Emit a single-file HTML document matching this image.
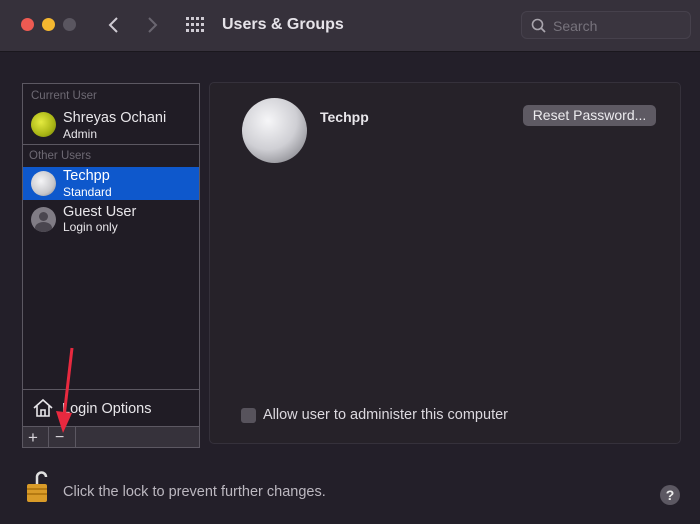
<!DOCTYPE html>
<html><head><style>
*{margin:0;padding:0;box-sizing:border-box}
body{width:700px;height:524px;background:#231f29;font-family:"Liberation Sans",sans-serif;color:#e8e6ea;position:relative;overflow:hidden}
.abs{position:absolute}
.tb{left:0;top:0;width:700px;height:52px;background:#36313b;border-bottom:1px solid #1a171d}
.dot{width:13px;height:13px;border-radius:50%;top:18px}
.t{font-size:13px}
</style></head><body>
<div class="abs tb">
 <div class="abs dot" style="left:21px;background:#ee5a52"></div>
 <div class="abs dot" style="left:42px;background:#f4b730"></div>
 <div class="abs dot" style="left:63px;background:#5a5660"></div>
 <svg class="abs" style="left:106px;top:16px" width="14" height="18"><path d="M11 2L4 9L11 16" stroke="#cfcbd3" stroke-width="2" fill="none"/></svg>
 <svg class="abs" style="left:146px;top:16px" width="14" height="18"><path d="M3 2L10 9L3 16" stroke="#6a6670" stroke-width="2" fill="none"/></svg>
 <svg class="abs" style="left:186px;top:17px" width="20" height="16" fill="#cfcbd3">
  <rect x="0" y="0" width="3" height="3"/><rect x="5" y="0" width="3" height="3"/><rect x="10" y="0" width="3" height="3"/><rect x="15" y="0" width="3" height="3"/>
  <rect x="0" y="6" width="3" height="3"/><rect x="5" y="6" width="3" height="3"/><rect x="10" y="6" width="3" height="3"/><rect x="15" y="6" width="3" height="3"/>
  <rect x="0" y="12" width="3" height="3"/><rect x="5" y="12" width="3" height="3"/><rect x="10" y="12" width="3" height="3"/><rect x="15" y="12" width="3" height="3"/>
 </svg>
 <div class="abs" style="left:222px;top:16px;font-size:16px;font-weight:bold;color:#e6e3e9">Users &amp; Groups</div>
 <div class="abs" style="left:521px;top:11px;width:170px;height:28px;border:1px solid #46414c;border-radius:6px;background:#3a353f"></div>
 <svg class="abs" style="left:531px;top:18px" width="16" height="16"><circle cx="6.5" cy="6.5" r="5" stroke="#a9a5ad" stroke-width="1.6" fill="none"/><path d="M10 10L14 14" stroke="#a9a5ad" stroke-width="1.8"/></svg>
 <div class="abs" style="left:553px;top:18px;font-size:14px;color:#77737c">Search</div>
</div>
<!-- sidebar -->
<div class="abs" style="left:22px;top:83px;width:178px;height:365px;border:1px solid #5c5862;background:#201c25"></div>
<div class="abs t" style="left:31px;top:90px;font-size:11.5px;color:#6d6973">Current User</div>
<div class="abs" style="left:31px;top:112px;width:25px;height:25px;border-radius:50%;background:radial-gradient(circle at 40% 40%,#e4ea40,#a9b515 60%,#6c7a0a)"></div>
<div class="abs t" style="left:63px;top:110px;font-size:14.5px">Shreyas Ochani</div>
<div class="abs" style="left:63px;top:127px;font-size:12px">Admin</div>
<div class="abs" style="left:22px;top:144px;width:178px;height:1px;background:#5c5862"></div>
<div class="abs" style="left:29px;top:150px;font-size:11.5px;color:#6d6973">Other Users</div>
<div class="abs" style="left:23px;top:167px;width:176px;height:33px;background:#0e58cc"></div>
<div class="abs" style="left:31px;top:171px;width:25px;height:25px;border-radius:50%;background:radial-gradient(circle at 40% 40%,#f4f4f6,#c8c8cc 60%,#7a7a80)"></div>
<div class="abs" style="left:63px;top:168px;font-size:14.5px;color:#fff">Techpp</div>
<div class="abs" style="left:63px;top:185px;font-size:12px;color:#fff">Standard</div>
<div class="abs" style="left:31px;top:207px;width:25px;height:25px;border-radius:50%;background:#807c85;overflow:hidden"><div class="abs" style="left:8px;top:5px;width:9px;height:9px;border-radius:50%;background:#4a464f"></div><div class="abs" style="left:4px;top:15px;width:17px;height:12px;border-radius:50%;background:#4a464f"></div></div>
<div class="abs" style="left:63px;top:204px;font-size:14.5px">Guest User</div>
<div class="abs" style="left:63px;top:220px;font-size:12px">Login only</div>
<div class="abs" style="left:22px;top:389px;width:178px;height:1px;background:#5c5862"></div>
<svg class="abs" style="left:32px;top:398px" width="22" height="20"><path d="M2 10L11 2L20 10M5 8V18H17V8M9 18V12H13V18" stroke="#e8e6ea" stroke-width="1.6" fill="none"/></svg>
<div class="abs" style="left:62px;top:401px;font-size:14.5px">Login Options</div>
<div class="abs" style="left:22px;top:426px;width:178px;height:22px;background:#36323b;border:1px solid #5c5862"></div>
<div class="abs" style="left:48px;top:427px;width:1px;height:21px;background:#5c5862"></div>
<div class="abs" style="left:75px;top:427px;width:1px;height:21px;background:#5c5862"></div>
<div class="abs" style="left:28px;top:428px;font-size:17px;color:#d8d5db">+</div>
<div class="abs" style="left:55px;top:429px;font-size:16px;color:#d8d5db">−</div>
<!-- red arrow -->
<svg class="abs" style="left:52px;top:345px" width="30" height="95"><path d="M20 3L12 72" stroke="#e8293f" stroke-width="3"/><path d="M4 66L11 88L20 68Z" fill="#e8293f"/></svg>
<!-- right panel -->
<div class="abs" style="left:209px;top:82px;width:472px;height:362px;border:1px solid #35313b;border-radius:5px;background:#262229"></div>
<div class="abs" style="left:242px;top:98px;width:65px;height:65px;border-radius:50%;background:radial-gradient(circle at 40% 35%,#f6f6f8,#cfcfd4 50%,#8a8a90 85%,#5a5a60)"></div>
<div class="abs" style="left:320px;top:109px;font-size:14px;font-weight:bold">Techpp</div>
<div class="abs" style="left:523px;top:105px;width:133px;height:21px;border-radius:5px;background:#5e5a63;font-size:14px;color:#ecebee;text-align:center;line-height:21px">Reset Password...</div>
<div class="abs" style="left:241px;top:408px;width:15px;height:15px;border-radius:3px;background:#57535c"></div>
<div class="abs" style="left:263px;top:407px;font-size:14.5px;color:#dcd9df">Allow user to administer this computer</div>
<!-- lock -->
<svg class="abs" style="left:25px;top:470px" width="26" height="34"><path d="M18 14V7a4.5 4.5 0 0 1 9 0" stroke="#e0e0e0" stroke-width="2.5" fill="none" transform="translate(-6,0)"/><rect x="2" y="14" width="20" height="18" rx="2" fill="#d99b28"/><rect x="2" y="18" width="20" height="2" fill="#b57a12"/><rect x="2" y="23" width="20" height="2" fill="#b57a12"/></svg>
<div class="abs" style="left:63px;top:484px;font-size:14.5px;color:#bcb8c0">Click the lock to prevent further changes.</div>
<div class="abs" style="left:660px;top:485px;width:20px;height:20px;border-radius:50%;background:#5c5862;color:#eee;font-size:14px;font-weight:bold;text-align:center;line-height:20px">?</div>
</body></html>
